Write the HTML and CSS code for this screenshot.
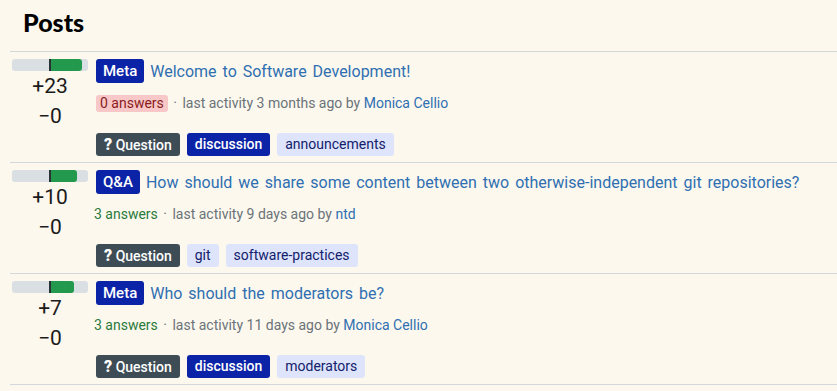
FILE: index.html
```html
<!DOCTYPE html>
<html lang="en">
<head>
  <meta charset="UTF-8" />
  <title>Posts</title>
  <link rel="stylesheet" href="styles.css">
</head>
<body>

  <h1 class="page-title">Posts</h1>

  <div class="post-list">

    <!-- Post 1 -->
    <div class="post">
      <div class="votes">
        <div class="vote-bar"><span class="bar-fill" style="width: 33px"></span></div>
        <div class="score">+23</div>
        <div class="score">&minus;0</div>
      </div>
      <div class="post-body">
        <div class="post-title">
          <span class="badge">Meta</span>
          <a href="#" class="title-link">Welcome to Software Development!</a>
        </div>
        <div class="post-meta">
          <span class="answers none">0 answers</span>
          <span class="dot">&middot;</span>
          last activity 3 months ago by <a href="#">Monica Cellio</a>
        </div>
        <div class="tags">
          <span class="tag type"><b class="q">?</b> Question</span>
          <span class="tag dark">discussion</span>
          <span class="tag">announcements</span>
        </div>
      </div>
    </div>

    <!-- Post 2 -->
    <div class="post">
      <div class="votes">
        <div class="vote-bar"><span class="bar-fill" style="width: 28px"></span></div>
        <div class="score">+10</div>
        <div class="score">&minus;0</div>
      </div>
      <div class="post-body">
        <div class="post-title">
          <span class="badge">Q&amp;A</span>
          <a href="#" class="title-link">How should we share some content between two otherwise-independent git repositories?</a>
        </div>
        <div class="post-meta">
          <span class="answers">3 answers</span>
          <span class="dot">&middot;</span>
          last activity 9 days ago by <a href="#">ntd</a>
        </div>
        <div class="tags">
          <span class="tag type"><b class="q">?</b> Question</span>
          <span class="tag">git</span>
          <span class="tag">software-practices</span>
        </div>
      </div>
    </div>

    <!-- Post 3 -->
    <div class="post">
      <div class="votes">
        <div class="vote-bar"><span class="bar-fill" style="width: 25px"></span></div>
        <div class="score">+7</div>
        <div class="score">&minus;0</div>
      </div>
      <div class="post-body">
        <div class="post-title">
          <span class="badge">Meta</span>
          <a href="#" class="title-link">Who should the moderators be?</a>
        </div>
        <div class="post-meta">
          <span class="answers">3 answers</span>
          <span class="dot">&middot;</span>
          last activity 11 days ago by <a href="#">Monica Cellio</a>
        </div>
        <div class="tags">
          <span class="tag type"><b class="q">?</b> Question</span>
          <span class="tag dark">discussion</span>
          <span class="tag">moderators</span>
        </div>
      </div>
    </div>

    <!-- Post 4, cut off by the window -->
    <div class="post">
      <div class="votes">
        <div class="vote-bar"><span class="bar-fill" style="width: 22px"></span></div>
      </div>
      <div class="post-body">
        <div class="post-title">
          <span class="badge badge-empty"></span>
        </div>
      </div>
    </div>

  </div>

</body>
</html>
```

FILE: styles.css
```css
* { margin: 0; padding: 0; box-sizing: border-box; }

body {
  font-family: Roboto, "Liberation Sans", sans-serif;
  background-color: #fcf8ee;
  color: #212529;
  height: 391px;
  overflow: hidden;
}

a {
  color: #2f6fb1;
  text-decoration: none;
}

.page-title {
  font-family: Lato, "Liberation Sans", sans-serif;
  font-weight: 900;
  font-size: 25px;
  line-height: 30px;
  padding: 7px 0 14px 23px;
  color: #000;
}

.post-list {
  margin-left: 10px;
}

.post {
  display: flex;
  border-top: 1px solid #d3d8dc;
  padding: 6px 0 6px 2px;
}

.votes {
  width: 76px;
  margin-right: 8px;
  display: flex;
  flex-direction: column;
  align-items: center;
}

.vote-bar {
  width: 76px;
  height: 12px;
  margin-top: 1px;
  background-color: #d9dfe2;
  border-radius: 3px;
  padding-left: 37px;
  display: flex;
}

.bar-fill {
  height: 100%;
  background-color: #23994d;
  border-left: 2px solid #2b3035;
  border-radius: 0 3px 3px 0;
}

.score {
  font-size: 21px;
  line-height: 30px;
  color: #1b1b1b;
}

.score:first-of-type {
  margin-top: 2px;
}

.post-body {
  flex: 1;
  display: flex;
  flex-direction: column;
}

.post-title {
  display: flex;
  align-items: center;
  height: 24px;
  gap: 6px;
  margin-top: 1px;
}

.badge {
  background-color: #0b23a6;
  color: #fff;
  font-size: 15px;
  font-weight: 500;
  height: 24px;
  line-height: 24px;
  padding: 0 7px;
  border-radius: 3px;
}

.badge-empty {
  width: 47px;
}

.title-link {
  font-size: 16px;
  word-spacing: 2px;
  color: #2f6fb1;
  white-space: nowrap;
}

.post-meta {
  margin-top: 12px;
  font-size: 14px;
  line-height: 17px;
  color: #6b7379;
}

.answers {
  color: #2a7a3b;
  margin-left: -2px;
}

.answers.none {
  background-color: #f8c7c7;
  color: #8a1c1c;
  padding: 0 4px;
  margin-left: 0;
  border-radius: 3px;
  display: inline-block;
}

.dot {
  margin: 0 2px;
}

.tags {
  display: flex;
  gap: 7px;
  margin-top: 21px;
}

.tag {
  font-size: 14px;
  line-height: 23px;
  height: 23px;
  padding: 0 8px;
  border-radius: 3px;
  background-color: #dde4fb;
  color: #13206b;
}

.tag.dark {
  background-color: #0b23a6;
  color: #fff;
  font-weight: 500;
}

.tag.type {
  background-color: #3e4d55;
  color: #fff;
  font-weight: 500;
}

.q {
  font-size: 16px;
  font-weight: 900;
}
```
